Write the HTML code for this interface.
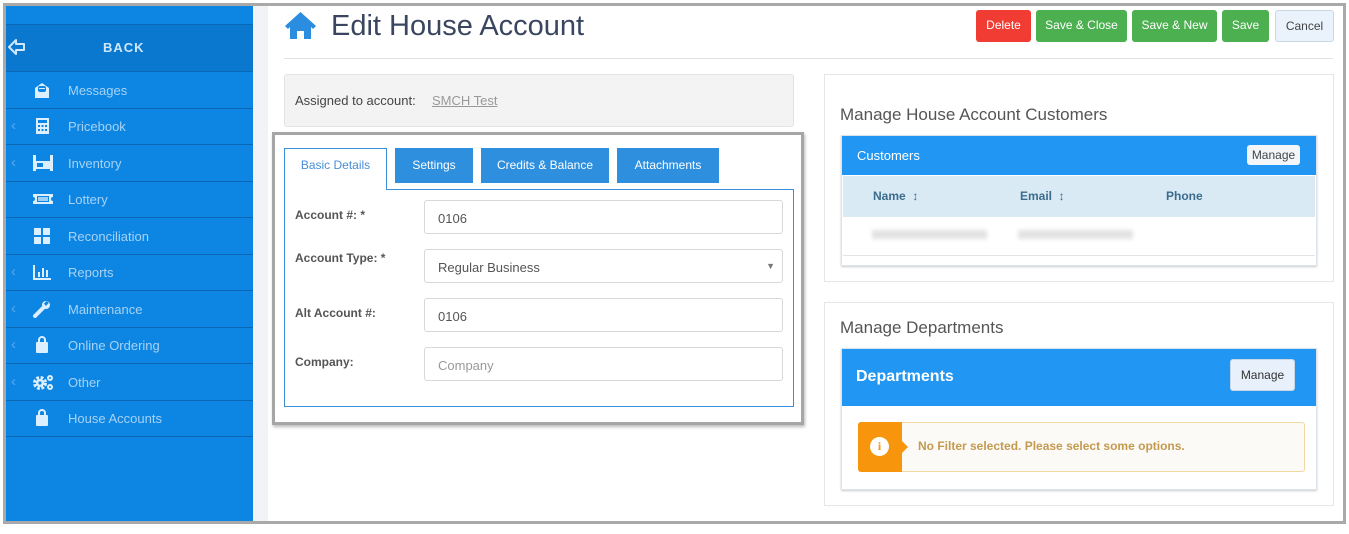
<!DOCTYPE html>
<html><head><meta charset="utf-8"><style>
*{box-sizing:border-box;margin:0;padding:0}
body{width:1349px;height:534px;background:#fff;font-family:"Liberation Sans",sans-serif;position:relative;overflow:hidden}
.abs{position:absolute}
.frame{left:3px;top:3px;width:1343px;height:521px;border:3px solid #a9a9a9}
.sb{left:4px;top:4px;width:249px;height:520px;background:#0d86e3}
.gap{left:253px;top:4px;width:15px;height:520px;background:#f2f3f7}
.back{left:4px;top:24px;width:249px;height:48px;background:#0b78d0;border-top:1px solid #0a68b5;border-bottom:1px solid #0a68b5}
.item{left:4px;width:249px;height:37px;border-bottom:1px solid #0a66b0;color:#a6d2f5;font-size:13px}
.item span{position:absolute;left:64px;top:11px}
.item svg{position:absolute;left:28px;top:9px}
.item .ch{position:absolute;left:7px;top:9px;color:#5aa8ec;font-size:15px;font-style:normal}
.btn{top:10px;height:32px;border-radius:3px;color:#fff;font-size:12px;text-align:center;line-height:31px}
.tab{top:148px;height:35px;background:#2e8fdf;color:#fff;font-size:12px;text-align:center;line-height:34px}
.lbl{left:295px;font-size:12px;font-weight:bold;color:#555}
.inp{left:424px;width:359px;height:34px;border:1px solid #d8d8d8;border-radius:3px;font-size:13px;color:#555;padding:10px 13px}
</style></head><body>
<div class="abs sb"></div>
<div class="abs gap"></div>
<div class="abs back"><svg class="abs" style="left:4px;top:13px" width="18" height="18" viewBox="0 0 18 18"><path d="M8 2 L1 9 L8 16 V12 H16 V6 H8 Z" fill="none" stroke="#cfe7fb" stroke-width="2" stroke-linejoin="round"/></svg><div class="abs" style="left:99px;top:15px;color:#cfe7fb;font-weight:bold;font-size:13px;letter-spacing:1px">BACK</div></div>
<div class="abs item" style="top:72px"><svg width="20" height="18" viewBox="0 0 20 18"><path d="M3 7 L10 2 L17 7 V17 H3 Z" fill="#dcefff"/><rect x="6" y="5" width="8" height="6" rx="2" fill="#0d86e3"/><rect x="7" y="7" width="6" height="1" fill="#dcefff"/></svg><span>Messages</span></div>
<div class="abs item" style="top:108px"><i class="ch">&lsaquo;</i><svg width="20" height="18" viewBox="0 0 20 18"><rect x="4" y="1" width="13" height="16" fill="#dcefff"/><rect x="6" y="3" width="9" height="3" fill="#0d86e3"/><g fill="#0d86e3"><rect x="6" y="8" width="2" height="2"/><rect x="9.5" y="8" width="2" height="2"/><rect x="13" y="8" width="2" height="2"/><rect x="6" y="12" width="2" height="2"/><rect x="9.5" y="12" width="2" height="2"/><rect x="13" y="12" width="2" height="2"/></g></svg><span>Pricebook</span></div>
<div class="abs item" style="top:145px"><i class="ch">&lsaquo;</i><svg width="22" height="18" viewBox="0 0 22 18"><path d="M1 1 H4 V7 H18 V1 H21 V17 H18 V15 H4 V17 H1 Z" fill="#dcefff"/><rect x="5" y="9" width="6" height="4" fill="#0d86e3"/></svg><span>Inventory</span></div>
<div class="abs item" style="top:181px"><svg width="22" height="18" viewBox="0 0 22 18"><path d="M1 4 H21 V7 A2 2 0 0 0 21 11 V14 H1 V11 A2 2 0 0 0 1 7 Z" fill="#dcefff"/><rect x="5" y="6" width="12" height="6" fill="#0d86e3"/><rect x="6" y="7" width="10" height="4" fill="#9fd0f8"/></svg><span>Lottery</span></div>
<div class="abs item" style="top:218px"><svg width="20" height="18" viewBox="0 0 20 18"><rect x="2" y="1" width="7" height="7" fill="#dcefff"/><rect x="11" y="1" width="7" height="7" fill="#dcefff"/><rect x="2" y="10" width="7" height="7" fill="#dcefff"/><rect x="11" y="10" width="7" height="7" fill="#dcefff"/></svg><span>Reconciliation</span></div>
<div class="abs item" style="top:254px"><i class="ch">&lsaquo;</i><svg width="20" height="18" viewBox="0 0 20 18"><path d="M2 2 V16 H19" fill="none" stroke="#dcefff" stroke-width="2"/><rect x="6" y="9" width="2" height="5" fill="#dcefff"/><rect x="10" y="5" width="2" height="9" fill="#dcefff"/><rect x="14" y="7" width="2" height="7" fill="#dcefff"/></svg><span>Reports</span></div>
<div class="abs item" style="top:291px"><i class="ch">&lsaquo;</i><svg width="20" height="18" viewBox="0 0 20 18"><path d="M3 16 L11 8" stroke="#dcefff" stroke-width="4" stroke-linecap="round"/><circle cx="14" cy="5" r="4" fill="#dcefff"/><rect x="13" y="1" width="3" height="4" fill="#0d86e3" transform="rotate(45 14 3)"/></svg><span>Maintenance</span></div>
<div class="abs item" style="top:327px"><i class="ch">&lsaquo;</i><svg width="20" height="18" viewBox="0 0 20 18"><path d="M7 6 V4 A3 3 0 0 1 13 4 V6" fill="none" stroke="#dcefff" stroke-width="2"/><rect x="4" y="6" width="12" height="11" rx="1" fill="#dcefff"/></svg><span>Online Ordering</span></div>
<div class="abs item" style="top:364px"><i class="ch">&lsaquo;</i><svg width="24" height="18" viewBox="0 0 24 18"><circle cx="8" cy="10" r="5" fill="none" stroke="#dcefff" stroke-width="4" stroke-dasharray="2.5 1.5"/><circle cx="8" cy="10" r="4" fill="#dcefff"/><circle cx="8" cy="10" r="1.6" fill="#0d86e3"/><circle cx="18" cy="5" r="3" fill="#dcefff"/><circle cx="18" cy="14" r="3" fill="#dcefff"/><circle cx="18" cy="5" r="1" fill="#0d86e3"/><circle cx="18" cy="14" r="1" fill="#0d86e3"/></svg><span>Other</span></div>
<div class="abs item" style="top:400px"><svg width="20" height="18" viewBox="0 0 20 18"><path d="M7 6 V4 A3 3 0 0 1 13 4 V6" fill="none" stroke="#dcefff" stroke-width="2"/><rect x="4" y="6" width="12" height="11" rx="1" fill="#dcefff"/></svg><span>House Accounts</span></div>

<svg class="abs" style="left:284px;top:11px" width="33" height="28" viewBox="0 0 33 28"><path d="M16.5 1 L1 15 L4 18 L6 16 V28 H13 V20 H20 V28 H27 V16 L29 18 L32 15 Z" fill="#2a8de0"/></svg>
<div class="abs" style="left:331px;top:10px;font-size:29px;color:#3a4660">Edit House Account</div>
<div class="abs" style="left:284px;top:58px;width:1049px;height:1px;background:#e2e2e2"></div>
<div class="abs btn" style="left:976px;width:55px;background:#f03c32">Delete</div>
<div class="abs btn" style="left:1036px;width:91px;background:#4caf50">Save &amp; Close</div>
<div class="abs btn" style="left:1132px;width:85px;background:#4caf50">Save &amp; New</div>
<div class="abs btn" style="left:1222px;width:47px;background:#4caf50">Save</div>
<div class="abs btn" style="left:1275px;width:59px;background:#eaf3fc;border:1px solid #c9d6e3;color:#444">Cancel</div>

<div class="abs" style="left:284px;top:74px;width:510px;height:53px;background:#f3f3f3;border:1px solid #e3e3e3;border-radius:3px"></div>
<div class="abs" style="left:295px;top:93px;font-size:13px;color:#444">Assigned to account:</div>
<div class="abs" style="left:432px;top:93px;font-size:13px;color:#999;text-decoration:underline">SMCH Test</div>

<div class="abs" style="left:272px;top:132px;width:532px;height:293px;border:3px solid #a6a6a6;box-shadow:1px 2px 3px #bbb"></div>
<div class="abs" style="left:284px;top:189px;width:510px;height:218px;border:1px solid #3a8fd8"></div>
<div class="abs" style="left:284px;top:148px;width:103px;height:42px;background:#fff;border:1px solid #3a8fd8;border-bottom:none;color:#4a8fd8;font-size:12px;text-align:center;line-height:33px">Basic Details</div>
<div class="abs tab" style="left:395px;width:78px">Settings</div>
<div class="abs tab" style="left:481px;width:128px">Credits &amp; Balance</div>
<div class="abs tab" style="left:617px;width:102px">Attachments</div>
<div class="abs lbl" style="top:208px">Account #: *</div>
<div class="abs lbl" style="top:251px">Account Type: *</div>
<div class="abs lbl" style="top:306px">Alt Account #:</div>
<div class="abs lbl" style="top:355px">Company:</div>
<div class="abs inp" style="top:200px">0106</div>
<div class="abs inp" style="top:249px">Regular Business<span class="abs" style="right:7px;top:11px;font-size:9px;color:#777">&#9660;</span></div>
<div class="abs inp" style="top:298px">0106</div>
<div class="abs inp" style="top:347px;color:#999">Company</div>

<div class="abs" style="left:824px;top:74px;width:510px;height:208px;border:1px solid #e6e6e6"></div>
<div class="abs" style="left:840px;top:105px;font-size:17px;color:#555">Manage House Account Customers</div>
<div class="abs" style="left:841px;top:135px;width:476px;height:131px;border:1px solid #dde3ea;box-shadow:0 1px 2px #ccc"></div>
<div class="abs" style="left:842px;top:136px;width:474px;height:39px;background:#2196f3"></div>
<div class="abs" style="left:857px;top:148px;font-size:13px;color:#fff">Customers</div>
<div class="abs" style="left:1247px;top:145px;width:53px;height:20px;background:#f3f6f9;border-radius:3px;font-size:12px;color:#444;text-align:center;line-height:20px">Manage</div>
<div class="abs" style="left:843px;top:176px;width:472px;height:41px;background:#d9eaf5"></div>
<div class="abs" style="left:873px;top:189px;font-size:12px;font-weight:bold;color:#3c6c8c">Name &nbsp;&#8597;</div>
<div class="abs" style="left:1020px;top:189px;font-size:12px;font-weight:bold;color:#3c6c8c">Email &nbsp;&#8597;</div>
<div class="abs" style="left:1166px;top:189px;font-size:12px;font-weight:bold;color:#3c6c8c">Phone</div>
<div class="abs" style="left:872px;top:230px;width:115px;height:9px;background:#e2e2e2;filter:blur(2px)"></div>
<div class="abs" style="left:1018px;top:230px;width:115px;height:9px;background:#e2e2e2;filter:blur(2px)"></div>
<div class="abs" style="left:843px;top:255px;width:472px;height:1px;background:#e3e3e3"></div>

<div class="abs" style="left:824px;top:302px;width:510px;height:204px;border:1px solid #e6e6e6"></div>
<div class="abs" style="left:840px;top:318px;font-size:17px;color:#555">Manage Departments</div>
<div class="abs" style="left:841px;top:348px;width:476px;height:142px;border:1px solid #dde3ea;box-shadow:0 1px 2px #ccc"></div>
<div class="abs" style="left:842px;top:349px;width:474px;height:57px;background:#2196f3"></div>
<div class="abs" style="left:856px;top:368px;font-size:16px;font-weight:bold;color:#fff">Departments</div>
<div class="abs" style="left:1230px;top:359px;width:65px;height:32px;background:#e8f1fb;border:1px solid #c9d6e3;border-radius:3px;font-size:12px;color:#333;text-align:center;line-height:30px">Manage</div>
<div class="abs" style="left:858px;top:422px;width:447px;height:50px;background:#fbfaf7;border:1px solid #f0d9a0;border-radius:3px"></div>
<div class="abs" style="left:858px;top:422px;width:44px;height:50px;background:#f7960c;border-radius:3px 0 0 3px"></div>
<div class="abs" style="left:902px;top:441px;width:0;height:0;border-top:6px solid transparent;border-bottom:6px solid transparent;border-left:6px solid #f7960c"></div>
<div class="abs" style="left:870px;top:437px;width:19px;height:19px;border-radius:50%;background:#fff;color:#f7960c;font-size:12px;font-weight:bold;text-align:center;line-height:19px;font-family:'Liberation Serif',serif">i</div>
<div class="abs" style="left:918px;top:439px;font-size:12px;font-weight:bold;color:#c49a4f">No Filter selected. Please select some options.</div>

<div class="abs frame"></div>
</body></html>
